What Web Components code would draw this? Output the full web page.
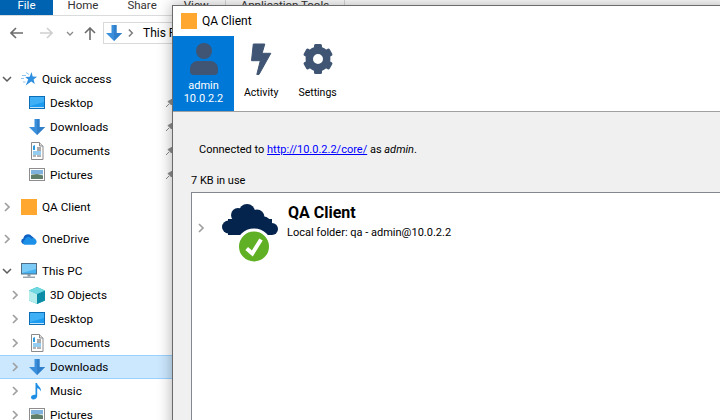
<!DOCTYPE html>
<html>
<head>
<meta charset="utf-8">
<title>QA Client</title>
<style>
    html, body { margin: 0; padding: 0; background: #fff; }
    body { width: 720px; height: 420px; overflow: hidden; font: 12px Roboto, "Noto Sans", sans-serif; color: #000; }
</style>
</head>
<body>
<desk-top>
    <explorer-pane>
        <tree-row icon="star" open group>Quick access</tree-row>
        <tree-row icon="desktop" level="1" pinned>Desktop</tree-row>
        <tree-row icon="down" level="1" pinned>Downloads</tree-row>
        <tree-row icon="doc" level="1" pinned>Documents</tree-row>
        <tree-row icon="pic" level="1" pinned>Pictures</tree-row>
        <tree-row icon="square" closed group>QA Client</tree-row>
        <tree-row icon="onedrive" closed group>OneDrive</tree-row>
        <tree-row icon="pc" open group>This PC</tree-row>
        <tree-row icon="cube" level="1" closed>3D Objects</tree-row>
        <tree-row icon="desktop" level="1" closed>Desktop</tree-row>
        <tree-row icon="doc" level="1" closed>Documents</tree-row>
        <tree-row icon="down" level="1" closed selected>Downloads</tree-row>
        <tree-row icon="music" level="1" closed>Music</tree-row>
        <tree-row icon="pic" level="1" closed>Pictures</tree-row>
    </explorer-pane>
    <client-window>
        <tool-button slot="tools" icon="person" active>admin<br>10.0.2.2</tool-button>
        <tool-button slot="tools" icon="bolt">Activity</tool-button>
        <tool-button slot="tools" icon="gear">Settings</tool-button>
        <folder-item name="QA Client" detail="Local folder: qa - admin@10.0.2.2"></folder-item>
    </client-window>
</desk-top>

<script>
const ICONS = {
    star: `<svg width="16" height="16" viewBox="0 0 16 16"><path d="M10.500 1l1.200 4.500 4.300.2-3.400 2.800 1.200 4.500-3.600-2.500-5.500 4 2.500-6-3-2.500 4.500-.2z" fill="#2f8fe0"/><path d="M1 4.500h4M0 7.500h3M2 11h2.500M5 1.500l3 2" stroke="#8cc6f2" stroke-width="1"/></svg>`,
    desktop: `<svg width="16" height="16" viewBox="0 0 16 16"><rect x=".5" y="1.500" width="15" height="12" fill="#1c9cf0" stroke="#0d6eb8"/><path d="M1 12.500h14" stroke="#bfe3fb" stroke-width="1"/><path d="M1 2h14v5L1 11z" fill="#3fb0f5"/></svg>`,
    down: `<svg width="16" height="18" viewBox="0 0 16 18"><path d="M5.500 1h5v8H16l-8 8-8-8h5.500z" fill="#3a8fdc"/><path d="M8 1h2.500v8H16l-8 8z" fill="#2f7fcb"/></svg>`,
    doc: `<svg width="16" height="18" viewBox="0 0 16 18"><path d="M2.500 .5h8l3.500 3.500v13.500H2.500z" fill="#fff" stroke="#8a8a8a"/><path d="M10.500 .5v3.500h3.500" fill="#ddd" stroke="#8a8a8a"/><path d="M8 6h4M8 8h4" stroke="#555"/><path d="M4 10h8" stroke="#2a9ae0"/><path d="M4 12h8" stroke="#2a9ae0"/><path d="M4 14h3M8 14h4" stroke="#666"/><path d="M4 4l2-1v5H4z" fill="#2a9ae0"/></svg>`,
    pic: `<svg width="16" height="14" viewBox="0 0 16 14"><rect x=".5" y=".5" width="15" height="12" fill="#fff" stroke="#8d8d8d"/><rect x="2" y="2" width="12" height="4" fill="#7fb2dc"/><rect x="2" y="6" width="12" height="5" fill="#5f7f6a"/><path d="M2 7l6-1 6 1.500V6H2z" fill="#cfdfe0"/></svg>`,
    square: `<svg width="16" height="16" viewBox="0 0 16 16"><rect width="16" height="16" fill="#ffa72f"/></svg>`,
    onedrive: `<svg width="17" height="12" viewBox="0 0 17 12"><path d="M3 11.500a3 3 0 0 1-.5-5.900A5 5 0 0 1 11.500 3 4 4 0 0 1 14 6.500h-8z" fill="#0f62c4"/><path d="M3.500 12a2.800 2.800 0 0 1 .5-5A3.800 3.800 0 0 1 11 5.500 3.200 3.200 0 0 1 14.500 12z" fill="#1c8fe6"/></svg>`,
    pc: `<svg width="16" height="16" viewBox="0 0 16 16"><rect x=".5" y=".5" width="15" height="10.500" fill="#46b3f2" stroke="#4f6d85"/><path d="M1 1h14v5L1 10z" fill="#7ccbf7"/><rect x="6.500" y="11" width="3" height="2.500" fill="#8a9aa6"/><rect x="2" y="13.500" width="12" height="1.500" fill="#9aa6ae"/></svg>`,
    cube: `<svg width="16" height="17" viewBox="0 0 16 17"><path d="M8 0l8 3.500v10L8 17 0 13.500v-10z" fill="#2ab4c8"/><path d="M0 3.500L8 7v10L0 13.500z" fill="#b5ecec"/><path d="M8 7l8-3.500v10L8 17z" fill="#0d8ca8"/><path d="M8 0l8 3.500L8 7 0 3.500z" fill="#6fd8e0"/></svg>`,
    music: `<svg width="12" height="18" viewBox="0 0 12 18"><path d="M4.500 1h1.500c.3 3 4.500 4 4 8.500-.7-2-2.500-3-3.800-3.200V14c0 2-2 3.500-4 3.500C.8 17.500 0 16.500 0 15.300c0-1.800 2.300-3 4.500-2.500z" fill="#1f8fe6"/></svg>`,
    person: `<svg width="28" height="32" viewBox="0 0 28 32"><circle cx="14" cy="8" r="8" fill="#3f5573"/><path d="M8 18h12c4.500 0 8 3 8 8v2.500c0 2-1.500 3.500-3.500 3.500h-21C1.500 32 0 30.500 0 28.500V26c0-5 3.500-8 8-8z" fill="#3f5573"/></svg>`,
    bolt: `<svg width="22" height="33" viewBox="0 0 22 33"><path d="M3.300 1h11.500l-2.700 9.300h8.700L9 31.500H6.800l3.500-13.800H1.500z" fill="#3f5573" stroke="#3f5573" stroke-linejoin="round"/></svg>`,
    gear: `<svg width="32" height="32" viewBox="0 0 32 32"><g fill="#3f5573"><rect x="12" y="1" width="8" height="7" rx="1.500"/><rect x="12" y="1" width="8" height="7" rx="1.500" transform="rotate(60 16 16)"/><rect x="12" y="1" width="8" height="7" rx="1.500" transform="rotate(120 16 16)"/><rect x="12" y="1" width="8" height="7" rx="1.500" transform="rotate(180 16 16)"/><rect x="12" y="1" width="8" height="7" rx="1.500" transform="rotate(240 16 16)"/><rect x="12" y="1" width="8" height="7" rx="1.500" transform="rotate(300 16 16)"/></g><circle cx="16" cy="16" r="8.700" fill="none" stroke="#3f5573" stroke-width="7.400"/></svg>`
};

const CHEVRON = `<svg width="7" height="10" viewBox="0 0 7 10"><path d="M1 1l4 4-4 4" fill="none" stroke="#a0a0a0" stroke-width="1.700"/></svg>`;
const CHEVRON_OPEN = `<svg width="10" height="7" viewBox="0 0 10 7"><path d="M1 1l4 4 4-4" fill="none" stroke="#5a5a5a" stroke-width="1.500"/></svg>`;
const PIN = `<svg width="10" height="10" viewBox="0 0 10 10"><path d="M1 9l3-3M3 3.500L6.500 7 9 2.500 7.500 1z" fill="#8c8c8c" stroke="#8c8c8c"/></svg>`;

class DeskTop extends HTMLElement
{
    constructor()
    {
        super();
        this.attachShadow({ mode: 'open' });
        this.shadowRoot.innerHTML = `
            <style>
                :host { display: block; position: relative; width: 720px; height: 420px; overflow: hidden; background: #fff; }
            </style>
            <slot></slot>
        `;
    }
}

class ExplorerPane extends HTMLElement
{
    constructor()
    {
        super();
        this.attachShadow({ mode: 'open' });
        this.shadowRoot.innerHTML = `
            <style>
                :host { display: block; width: 720px; height: 420px; overflow: hidden; }
                .ribbon { display: flex; height: 15px; border-bottom: 1px solid #dadbdc; font-size: 11.5px; line-height: 10px; overflow: hidden; color: #333; }
                .tab { padding: 0 14.500px; white-space: nowrap; }
                .tab.file { width: 53px; padding: 0; box-sizing: border-box; background: #0063b1; color: #fff; text-align: center; }
                .tab.view { margin-left: -2px; }
                .tab.tools { border-left: 1px solid #dadbdc; border-right: 1px solid #dadbdc; margin-left: 2px; }
                .nav { display: flex; align-items: center; height: 34px; padding-left: 10px; }
                .nav svg { display: block; }
                .address { display: flex; align-items: center; height: 20px; width: 400px; margin-left: 7px; border: 1px solid #d9d9d9; padding-left: 2px; }
                .address .sep { margin: 0 9px 0 6px; display: flex; }
                .tree { padding-top: 17px; }
            </style>
            <div class="ribbon">
                <div class="tab file">File</div>
                <div class="tab">Home</div>
                <div class="tab">Share</div>
                <div class="tab view">View</div>
                <div class="tab tools">Application Tools</div>
            </div>
            <div class="nav">
                <svg width="13" height="12" viewBox="0 0 13 12" style="margin-right:17px"><path d="M6 1L1 6l5 5M1 6h12" fill="none" stroke="#6d6d6d" stroke-width="1.600"/></svg>
                <svg width="13" height="12" viewBox="0 0 13 12" style="margin-right:13px"><path d="M7 1l5 5-5 5M12 6H0" fill="none" stroke="#cfcfcf" stroke-width="1.600"/></svg>
                <svg width="8" height="5" viewBox="0 0 8 5" style="margin-right:10px"><path d="M1 1l3 3 3-3" fill="none" stroke="#8a8a8a" stroke-width="1.300"/></svg>
                <svg width="12" height="13" viewBox="0 0 12 13"><path d="M1 6l5-5 5 5M6 1v12" fill="none" stroke="#6d6d6d" stroke-width="1.600"/></svg>
                <div class="address">
                    ${ICONS.down}
                    <span class="sep">${CHEVRON.replace('#a0a0a0', '#7a7a7a').replace('width="7"', 'width="6"')}</span>
                    <span>This PC</span>
                </div>
            </div>
            <div class="tree"><slot></slot></div>
        `;
    }
}

class TreeRow extends HTMLElement
{
    constructor()
    {
        super();
        this.attachShadow({ mode: 'open' });
    }

    connectedCallback()
    {
        const level = Number(this.getAttribute('level') || 0);
        const chevron = this.hasAttribute('open') ? CHEVRON_OPEN : this.hasAttribute('closed') ? CHEVRON : '';
        const pin = this.hasAttribute('pinned') ? PIN : '';
        this.shadowRoot.innerHTML = `
            <style>
                :host { display: block; height: 24px; font-size: 11.75px; }
                :host([group]) { margin-top: 8px; }
                :host([group]:first-child) { margin-top: 0; }
                :host([selected]) { background: #cce8ff; box-shadow: inset 0 1px 0 #99d1ff, inset 0 -1px 0 #99d1ff; }
                .row { display: flex; align-items: center; height: 24px; padding-left: ${2 + level * 8}px; }
                .chev { width: 10px; display: flex; justify-content: center; flex: none; margin-right: 9px; }
                .icon { width: 16px; display: flex; justify-content: center; flex: none; margin-right: 5px; }
                .pin { margin-left: auto; margin-right: 545px; display: flex; }
                svg { display: block; }
            </style>
            <div class="row">
                <span class="chev">${chevron}</span>
                <span class="icon">${ICONS[this.getAttribute('icon')]}</span>
                <span><slot></slot></span>
                <span class="pin">${pin}</span>
            </div>
        `;
    }
}

class ClientWindow extends HTMLElement
{
    constructor()
    {
        super();
        this.attachShadow({ mode: 'open' });
        this.shadowRoot.innerHTML = `
            <style>
                :host { position: absolute; left: 172px; top: 5px; width: 560px; height: 430px; display: flex; flex-direction: column; box-sizing: border-box; border: 1px solid #6b6b6b; background: #f0f0f0; font-size: 11px; box-shadow: 0 0 14px rgba(0, 0, 0, .32); }
                .title { display: flex; align-items: center; gap: 5px; height: 30px; padding-left: 8px; background: #fff; flex: none; font-size: 12px; }
                .title svg { display: block; }
                .tools { display: flex; flex: none; background: #fff; border-bottom: 1px solid #a0a0a0; box-sizing: border-box; height: 76px; }
                .status { margin: 30px 0 0 26px; line-height: 16px; }
                .status a { color: #0000ff; text-decoration: underline; }
                .usage { margin: 15px 0 0 18px; line-height: 16px; }
                .panel { flex: 1; margin: 3px 8px 0 18px; background: #fff; border: 1px solid #828790; }
            </style>
            <div class="title">${ICONS.square}<span>QA Client</span></div>
            <div class="tools"><slot name="tools"></slot></div>
            <div class="status">Connected to <a>http://10.0.2.2/core/</a> as <i>admin</i>.</div>
            <div class="usage">7 KB in use</div>
            <div class="panel"><slot></slot></div>
        `;
    }
}

class ToolButton extends HTMLElement
{
    constructor()
    {
        super();
        this.attachShadow({ mode: 'open' });
    }

    connectedCallback()
    {
        this.shadowRoot.innerHTML = `
            <style>
                :host { display: flex; flex-direction: column; align-items: center; padding: 7px 10px 0; color: #000; font-size: 10.5px; text-align: center; line-height: 13px; }
                :host([active]) { background: #0078d7; color: #fff; font-size: 11px; width: 61px; padding: 7px 0 0; box-sizing: border-box; }
                .icon { height: 33px; margin-bottom: 3px; display: flex; align-items: flex-start; justify-content: center; }
                :host(:not([active])) .icon { margin-bottom: 10px; }
                svg { display: block; }
            </style>
            <div class="icon">${ICONS[this.getAttribute('icon')]}</div>
            <div><slot></slot></div>
        `;
    }
}

class FolderItem extends HTMLElement
{
    constructor()
    {
        super();
        this.attachShadow({ mode: 'open' });
    }

    connectedCallback()
    {
        this.shadowRoot.innerHTML = `
            <style>
                :host { display: flex; align-items: flex-start; padding: 8px 0 0 6px; }
                .chev { margin: 22px 17px 0 0; display: flex; }
                .cloud { display: block; margin-right: 8px; flex: none; }
                .name { font-weight: 700; font-size: 16px; line-height: 22px; margin-top: 1px; }
                .detail { line-height: 16px; margin-top: 1px; margin-left: -1px; }
            </style>
            <span class="chev">${CHEVRON}</span>
            <svg class="cloud" width="58" height="62" viewBox="222 200 58 62">
                <g fill="#04244d">
                    <circle cx="228.500" cy="226" r="6.500"/>
                    <circle cx="238" cy="214" r="7"/>
                    <circle cx="247" cy="211" r="8"/>
                    <circle cx="257" cy="216" r="7.500"/>
                    <circle cx="264" cy="222" r="6.500"/>
                    <circle cx="272" cy="228" r="6"/>
                    <path d="M228 218h44v16h-44z"/>
                </g>
                <circle cx="254" cy="245.500" r="16.500" fill="#5fb024" stroke="#fff" stroke-width="3"/>
                <path d="M246.700 247.500l5.600 5 8.700-14" fill="none" stroke="#fff" stroke-width="4"/>
            </svg>
            <div>
                <div class="name">${this.getAttribute('name')}</div>
                <div class="detail">${this.getAttribute('detail')}</div>
            </div>
        `;
    }
}

customElements.define('desk-top', DeskTop);
customElements.define('explorer-pane', ExplorerPane);
customElements.define('tree-row', TreeRow);
customElements.define('client-window', ClientWindow);
customElements.define('tool-button', ToolButton);
customElements.define('folder-item', FolderItem);
</script>
</body>
</html>
